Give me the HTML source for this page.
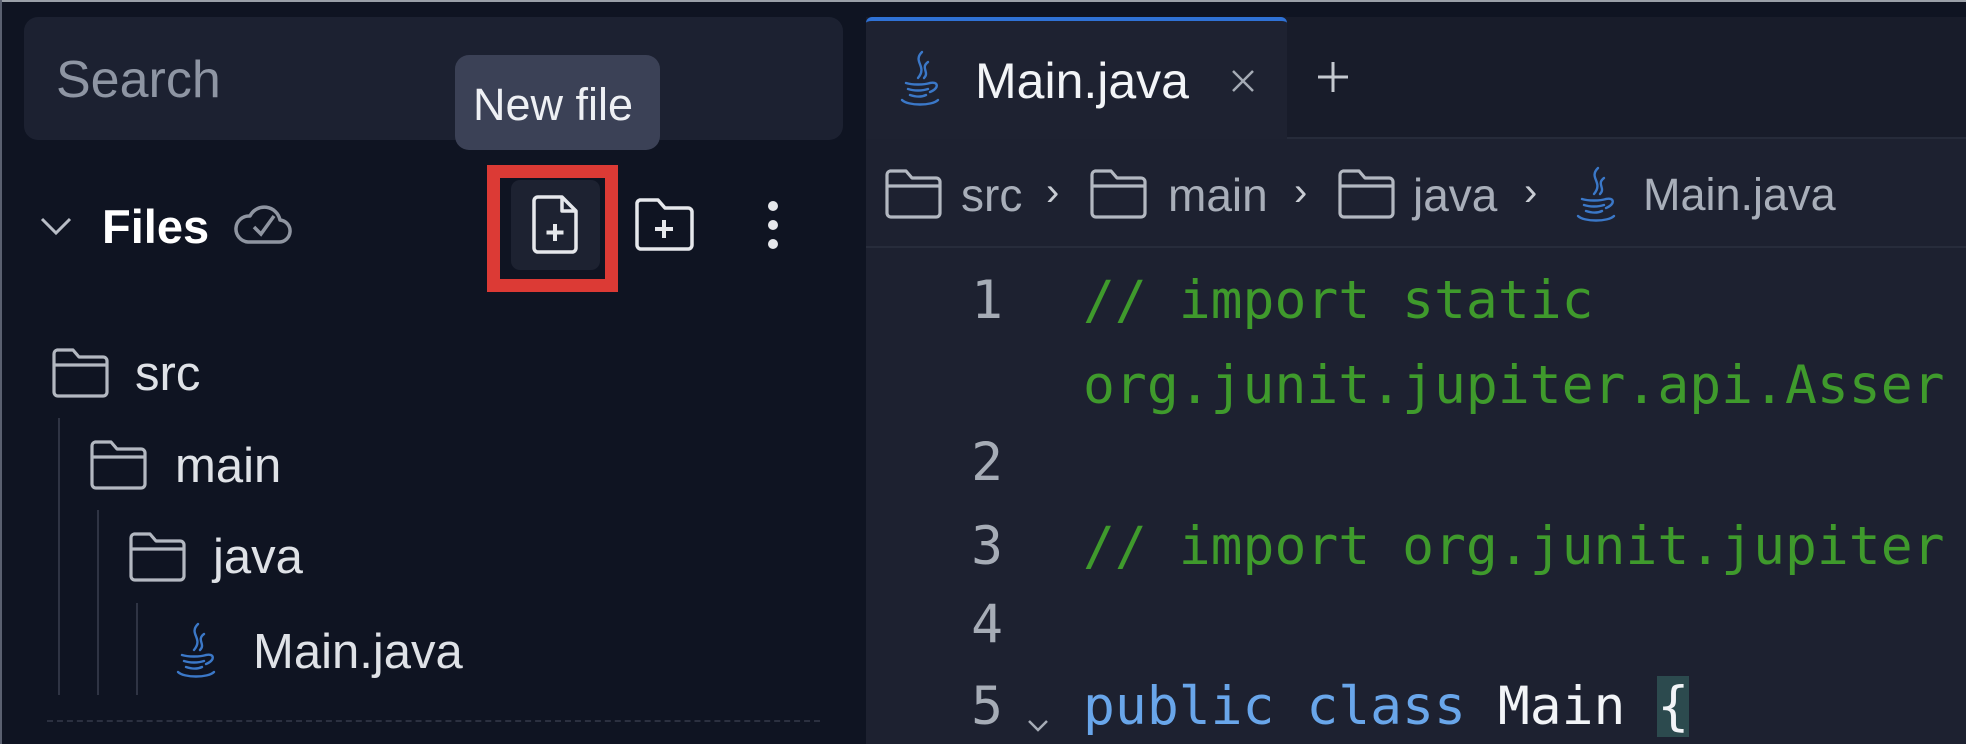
<!DOCTYPE html>
<html><head><meta charset="utf-8"><style>
*{margin:0;padding:0;box-sizing:border-box}
body{width:1966px;height:744px;overflow:hidden;background:#0f1422;position:relative;font-family:"Liberation Sans",sans-serif}
.a{position:absolute;white-space:nowrap}
.t{line-height:1}
.mono{font-family:"DejaVu Sans Mono","Liberation Mono",monospace;font-size:53px;line-height:1}
</style></head><body>
<div class="a" style="left:0;top:0;width:1966px;height:2px;background:#9aa0a8"></div>
<div class="a" style="left:0;top:0;width:2px;height:744px;background:#5a6070"></div>
<!-- sidebar -->
<div class="a" style="left:24px;top:17px;width:819px;height:123px;background:#1c2131;border-radius:14px"></div>
<div class="a t" style="left:56px;top:54px;font-size:52px;color:#8e95a3">Search</div>
<div class="a" style="left:455px;top:55px;width:205px;height:95px;background:#3b4156;border-radius:14px"></div>
<div class="a t" style="left:473px;top:82px;font-size:45px;color:#eef0f4">New file</div>
<svg class="a" style="left:38px;top:214px" width="36" height="24" viewBox="0 0 36 24"><path d="M4 5 L18 19 L32 5" fill="none" stroke="#b8bdc6" stroke-width="3"/></svg>
<div class="a t" style="left:102px;top:203px;font-size:47px;font-weight:bold;color:#fff">Files</div>
<svg class="a" style="left:234px;top:200px" width="60" height="50" viewBox="0 0 60 50"><path d="M14 42 H44 A11 11 0 0 0 46 20 A16 16 0 0 0 16 16 A13 13 0 0 0 14 42 Z" fill="none" stroke="#8f95a1" stroke-width="3.5" stroke-linejoin="round"/><path d="M20 27 L27 34 L40 16" fill="none" stroke="#8f95a1" stroke-width="3.5"/></svg>
<div class="a" style="left:487px;top:165px;width:131px;height:127px;border:13px solid #dc3a35"></div>
<div class="a" style="left:511px;top:180px;width:89px;height:90px;background:#1d2231;border-radius:9px"></div>
<svg class="a" style="left:530px;top:194px" width="54" height="62" viewBox="0 0 54 62"><path d="M8 3 H32 L46 17 V54 A4 4 0 0 1 42 58 H8 A4 4 0 0 1 4 54 V7 A4 4 0 0 1 8 3 Z M32 3 V17 H46" fill="none" stroke="#e6e8ec" stroke-width="3.5" stroke-linejoin="round"/><path d="M25 30 V47 M16.5 38.5 H33.5" stroke="#e6e8ec" stroke-width="4"/></svg>
<svg class="a" style="left:634px;top:196px" width="62" height="58" viewBox="0 0 62 58"><path d="M6 4 H24 L31 12 H54 A4 4 0 0 1 58 16 V49 A4 4 0 0 1 54 53 H7 A4 4 0 0 1 3 49 V7 A4 4 0 0 1 6 4 Z" fill="none" stroke="#e6e8ec" stroke-width="3.5" stroke-linejoin="round"/><path d="M30 24 V42 M21 33 H39" stroke="#e6e8ec" stroke-width="4"/></svg>
<svg class="a" style="left:765px;top:198px" width="16" height="54"><circle cx="8" cy="8" r="5" fill="#e6e8ec"/><circle cx="8" cy="27" r="5" fill="#e6e8ec"/><circle cx="8" cy="46" r="5" fill="#e6e8ec"/></svg>
<!-- tree -->
<svg width="0" height="0" style="position:absolute"><defs>
<symbol id="fold" viewBox="0 0 60 52"><path d="M6 3 H22 L28 10 H52 A4 4 0 0 1 56 14 V45 A4 4 0 0 1 52 49 H7 A4 4 0 0 1 3 45 V7 A4 4 0 0 1 6 3 Z M3 18 H56" fill="none" stroke="#b3b8c1" stroke-width="3.2" stroke-linejoin="round"/></symbol>
<symbol id="java" viewBox="0 0 44 58"><g fill="none" stroke="#3b78c8" stroke-width="2.4" stroke-linecap="round"><path d="M24 2 C14 12 30 16 20 28"/><path d="M30 12 C22 18 32 22 26 28"/><path d="M8 33 C14 35 26 35 32 33"/><path d="M32 33 C40 31 42 38 32 42"/><path d="M10 39 C16 41 24 41 30 39"/><path d="M12 45 C18 47 24 47 28 45"/><path d="M4 50 C10 56 34 56 40 50"/></g></symbol>
</defs></svg>
<svg class="a" style="left:51px;top:347px" width="60" height="52"><use href="#fold"/></svg>
<div class="a t" style="left:135px;top:350px;font-size:49px;color:#dfe2e7">src</div>
<div class="a" style="left:58px;top:418px;width:2px;height:277px;background:#2f3444"></div>
<svg class="a" style="left:89px;top:439px" width="60" height="52"><use href="#fold"/></svg>
<div class="a t" style="left:175px;top:442px;font-size:49px;color:#dfe2e7">main</div>
<div class="a" style="left:97px;top:510px;width:2px;height:185px;background:#2f3444"></div>
<svg class="a" style="left:128px;top:531px" width="60" height="52"><use href="#fold"/></svg>
<div class="a t" style="left:213px;top:533px;font-size:49px;color:#dfe2e7">java</div>
<div class="a" style="left:136px;top:603px;width:2px;height:92px;background:#2f3444"></div>
<svg class="a" style="left:174px;top:622px" width="44" height="58"><use href="#java"/></svg>
<div class="a t" style="left:253px;top:628px;font-size:49px;color:#dfe2e7">Main.java</div>
<div class="a" style="left:47px;top:720px;width:773px;border-top:2px dashed #2b3040"></div>
<!-- editor -->
<div class="a" style="left:866px;top:17px;width:1100px;height:727px;background:#1d2130;overflow:hidden"></div>
<div class="a" style="left:866px;top:17px;width:1100px;height:121px;background:#181c2a"></div>
<div class="a" style="left:866px;top:17px;width:421px;height:122px;background:#1e2231;border-top:4px solid #2f72d6;border-radius:6px 6px 0 0"></div>
<div class="a" style="left:1287px;top:137px;width:679px;height:2px;background:#262b3a"></div>
<svg class="a" style="left:898px;top:50px" width="44" height="58"><use href="#java"/></svg>
<div class="a t" style="left:975px;top:56px;font-size:50px;color:#f2f4f7">Main.java</div>
<svg class="a" style="left:1230px;top:68px" width="26" height="26"><path d="M3 3 L23 23 M23 3 L3 23" stroke="#a5abb5" stroke-width="2.5"/></svg>
<svg class="a" style="left:1316px;top:60px" width="34" height="34"><path d="M17 2 V32 M2 17 H32" stroke="#c5c9d0" stroke-width="3"/></svg>
<div class="a" style="left:866px;top:246px;width:1100px;height:2px;background:#272c3b"></div>
<svg class="a" style="left:884px;top:168px" width="60" height="52"><use href="#fold"/></svg>
<div class="a t" style="left:961px;top:172px;font-size:46px;color:#a8aeb9">src</div>
<div class="a t" style="left:1046px;top:172px;font-size:40px;color:#c8ccd3">›</div>
<svg class="a" style="left:1089px;top:168px" width="60" height="52"><use href="#fold"/></svg>
<div class="a t" style="left:1168px;top:172px;font-size:46px;color:#a8aeb9">main</div>
<div class="a t" style="left:1294px;top:172px;font-size:40px;color:#c8ccd3">›</div>
<svg class="a" style="left:1337px;top:168px" width="60" height="52"><use href="#fold"/></svg>
<div class="a t" style="left:1413px;top:172px;font-size:46px;color:#a8aeb9">java</div>
<div class="a t" style="left:1524px;top:172px;font-size:40px;color:#c8ccd3">›</div>
<svg class="a" style="left:1574px;top:166px" width="44" height="58"><use href="#java"/></svg>
<div class="a t" style="left:1643px;top:172px;font-size:45px;color:#a8aeb9">Main.java</div>
<!-- code -->
<div class="a mono" style="left:943px;top:274px;width:60px;text-align:right;color:#a6acb6">1</div>
<div class="a mono" style="left:1083px;top:274px;color:#3f9a2c">// import static</div>
<div class="a mono" style="left:1083px;top:359px;color:#3f9a2c">org.junit.jupiter.api.Asser</div>
<div class="a mono" style="left:943px;top:436px;width:60px;text-align:right;color:#a6acb6">2</div>
<div class="a mono" style="left:943px;top:520px;width:60px;text-align:right;color:#a6acb6">3</div>
<div class="a mono" style="left:1083px;top:520px;color:#3f9a2c">// import org.junit.jupiter</div>
<div class="a mono" style="left:943px;top:598px;width:60px;text-align:right;color:#a6acb6">4</div>
<div class="a mono" style="left:943px;top:680px;width:60px;text-align:right;color:#a6acb6">5</div>
<svg class="a" style="left:1026px;top:718px" width="24" height="16"><path d="M3 3 L12 12 L21 3" fill="none" stroke="#a6acb6" stroke-width="2.5"/></svg>
<div class="a mono" style="left:1083px;top:680px;color:#69a6ea">public class <span style="color:#f2f4f7">Main</span> <span style="color:#f2f4f7;background:#2c4a4e">{</span></div>
</body></html>
